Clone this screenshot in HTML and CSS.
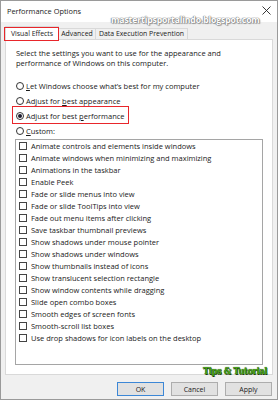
FILE: index.html
```html
<!DOCTYPE html>
<html>
<head>
<meta charset="utf-8">
<link rel="stylesheet" href="styles.css">
</head>
<body>
<div class="dialog">
  <div class="titlebar">
    <span class="title">Performance Options</span>
    <span class="watermark">mastertipsportalindo.blogspot.com</span>
    <svg class="close" width="9" height="9" viewBox="0 0 9 9"><path d="M0.5 0.5 L8.5 8.5 M8.5 0.5 L0.5 8.5" stroke="#222" stroke-width="0.9" fill="none"/></svg>
  </div>
  <div class="body">
    <div class="tabs">
      <div class="tab tab-ve selected marked">Visual Effects</div>
      <div class="tab tab-adv">Advanced</div>
      <div class="tab tab-dep">Data Execution Prevention</div>
    </div>
    <div class="panel">
      <p class="desc">Select the settings you want to use for the appearance and<br>performance of Windows on this computer.</p>
      <div class="radios">
        <div class="radio"><span class="dot"></span><span><u>L</u>et Windows choose what’s best for my computer</span></div>
        <div class="radio"><span class="dot"></span><span>Adjust for <u>b</u>est appearance</span></div>
        <div class="radio checked marked"><span class="dot"></span><span>Adjust for best <u>p</u>erformance</span></div>
        <div class="radio"><span class="dot"></span><span><u>C</u>ustom:</span></div>
      </div>
      <div class="list">
        <div class="item"><span class="box"></span>Animate controls and elements inside windows</div>
        <div class="item"><span class="box"></span>Animate windows when minimizing and maximizing</div>
        <div class="item"><span class="box"></span>Animations in the taskbar</div>
        <div class="item"><span class="box"></span>Enable Peek</div>
        <div class="item"><span class="box"></span>Fade or slide menus into view</div>
        <div class="item"><span class="box"></span>Fade or slide ToolTips into view</div>
        <div class="item"><span class="box"></span>Fade out menu items after clicking</div>
        <div class="item"><span class="box"></span>Save taskbar thumbnail previews</div>
        <div class="item"><span class="box"></span>Show shadows under mouse pointer</div>
        <div class="item"><span class="box"></span>Show shadows under windows</div>
        <div class="item"><span class="box"></span>Show thumbnails instead of icons</div>
        <div class="item"><span class="box"></span>Show translucent selection rectangle</div>
        <div class="item"><span class="box"></span>Show window contents while dragging</div>
        <div class="item"><span class="box"></span>Slide open combo boxes</div>
        <div class="item"><span class="box"></span>Smooth edges of screen fonts</div>
        <div class="item"><span class="box"></span>Smooth-scroll list boxes</div>
        <div class="item"><span class="box"></span>Use drop shadows for icon labels on the desktop</div>
      </div>
      <span class="tips">Tips &amp; Tutorial</span>
    </div>
    <div class="buttons">
      <button class="btn default">OK</button>
      <button class="btn">Cancel</button>
      <button class="btn">Apply</button>
    </div>
  </div>
</div>
</body>
</html>
```
FILE: styles.css
```css
* { box-sizing: border-box; }
html, body { margin: 0; padding: 0; }
body {
  font-family: "Open Sans", "Noto Sans", sans-serif;
  font-size: 7.5px;
  color: #1a1a1a;
  background: #ffffff;
}
.dialog {
  width: 278px;
  height: 400px;
  border: 1px solid #9a9a9a;
  background: #f0f0f0;
  display: flex;
  flex-direction: column;
}
.titlebar {
  position: relative;
  height: 21px;
  background: #ffffff;
  display: flex;
  align-items: center;
  padding: 0 6px;
}
.title {
  font-size: 7.4px;
  color: #222;
  flex: 1;
  margin-top: -2px;
}
.close { margin-top: -2px; }
.watermark {
  position: absolute;
  left: 110px;
  top: 13px;
  font-family: "Open Sans", sans-serif;
  font-weight: 700;
  font-size: 8.6px;
  color: #ffffff;
  letter-spacing: -0.1px;
  white-space: nowrap;
  text-shadow: 0 0 1px #777, 0 0 1px #777, 1px 1px 1px #999, -0.5px -0.5px 1px #999;
  z-index: 2;
}
.body {
  flex: 1;
  display: flex;
  flex-direction: column;
  padding: 3px 4px 0 4px;
}
.tabs {
  display: flex;
  align-items: flex-end;
  height: 14px;
  position: relative;
  z-index: 1;
}
.tab {
  height: 11px;
  border: 1px solid #d9d9d9;
  border-bottom: none;
  background: #f0f0f0;
  display: flex;
  align-items: center;
  justify-content: center;
  font-size: 6.9px;
  margin-left: -1px;
  padding-bottom: 1px;
  white-space: nowrap;
}
.tab.selected {
  height: 14px;
  background: #ffffff;
  margin-bottom: -1px;
  margin-left: 0;
}
.tab-ve { width: 54px; }
.tab-adv { width: 38px; }
.tab-dep { width: 93px; }
.marked { position: relative; }
.tab.marked::after {
  content: "";
  position: absolute;
  left: -2px; right: -1px; top: 0px; bottom: -1px;
  border: 1.2px solid #e8262b;
}
.panel {
  position: relative;
  height: 336px;
  background: #ffffff;
  border: 1px solid #d9d9d9;
  padding: 9px 9px 9px 10px;
  display: flex;
  flex-direction: column;
}
.desc {
  margin: 0;
  line-height: 9.5px;
}
.radios {
  margin-top: 10px;
  display: flex;
  flex-direction: column;
  align-items: flex-start;
}
.radio {
  height: 15px;
  display: flex;
  align-items: center;
  gap: 2px;
  white-space: nowrap;
}
.radio u { text-decoration-thickness: 0.6px; text-underline-offset: 1px; }
.dot {
  width: 8px;
  height: 8px;
  border: 1px solid #333;
  border-radius: 50%;
  background: #fff;
  display: flex;
  align-items: center;
  justify-content: center;
}
.radio.checked .dot::before {
  content: "";
  width: 4px;
  height: 4px;
  border-radius: 50%;
  background: #1b1b2e;
}
.radio.marked::after {
  content: "";
  position: absolute;
  left: -4px; right: -4px; top: -2px; bottom: -1px;
  border: 1.2px solid #e8262b;
}
.list {
  flex: 1;
  margin: 1px 0 0 -1px;
  border: 1px solid #a5a5a5;
  background: #fff;
}
.item {
  height: 12px;
  display: flex;
  align-items: center;
  padding-left: 3px;
  white-space: nowrap;
}
.box {
  width: 8px;
  height: 8px;
  border: 1px solid #444;
  background: #fff;
  margin-right: 4px;
  flex: none;
}
.tips {
  position: absolute;
  left: 197px;
  bottom: -2px;
  font-family: "DejaVu Serif", serif;
  font-weight: 700;
  font-size: 9.5px;
  letter-spacing: -0.6px;
  white-space: nowrap;
  color: #47a01a;
  text-shadow: 0 0 1px #1b3d05, 0.5px 0.5px 0 #1b3d05;
  transform: scaleX(0.9);
  transform-origin: left;
  z-index: 2;
}
.buttons {
  display: flex;
  justify-content: flex-end;
  gap: 7px;
  margin-top: 7px;
  padding-right: 1px;
}
.btn {
  width: 47px;
  height: 14px;
  background: #e1e1e1;
  border: 1px solid #adadad;
  font-family: "Open Sans", "Noto Sans", sans-serif;
  font-size: 7px;
  color: #1a1a1a;
  padding: 0;
  margin: 0;
  line-height: 1;
}
.btn.default { border-color: #3c87d6; }
```
